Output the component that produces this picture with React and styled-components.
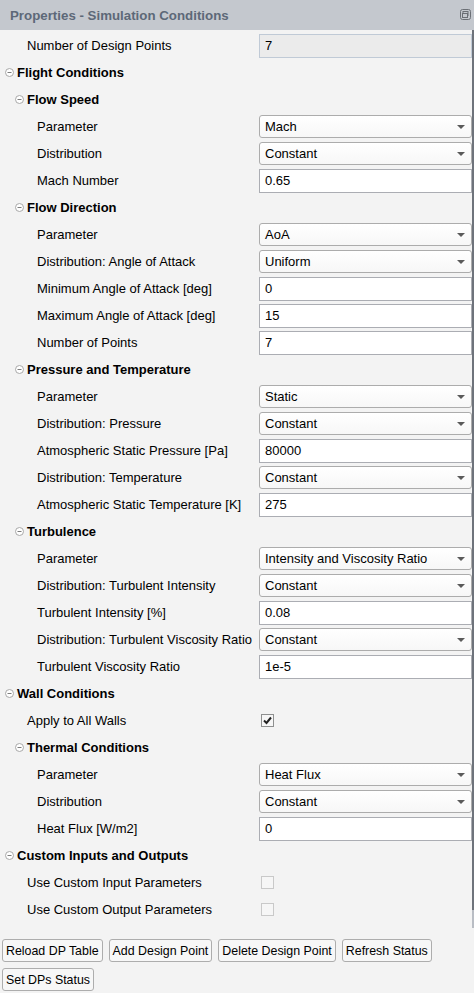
import React from 'react'
import styled, { createGlobalStyle } from 'styled-components'

const Global = createGlobalStyle`
  html, body {
    margin: 0;
    padding: 0;
    background: #f3f3f3;
  }
  body {
    font-family: "Liberation Sans", Arial, sans-serif;
    font-size: 13px;
    color: #000;
  }
`

const Panel = styled.div`
  width: 474px;
  height: 993px;
  display: flex;
  flex-direction: column;
  background: #f3f3f3;
  overflow: hidden;
`

const Header = styled.div`
  height: 30px;
  flex: none;
  display: flex;
  align-items: center;
  justify-content: space-between;
  padding: 0 3px 0 10px;
  background: #c4c8ce;
  color: #5d6878;
  font-weight: bold;
  font-size: 13.3px;
`

const FloatIcon = styled.svg`
  width: 11px;
  height: 11px;
  margin-top: -2px;
`

const Body = styled.div`
  display: flex;
  height: 898px;
  flex: none;
`

const Rows = styled.div`
  flex: 1;
  display: flex;
  flex-direction: column;
  padding-top: 2px;
`

const Scroll = styled.div`
  width: 2px;
  flex: none;
  display: flex;
  flex-direction: column;
  background: #b9bdc4;
`

const Thumb = styled.div`
  height: 880px;
  background: #6e737b;
`

const Row = styled.div`
  height: 27px;
  display: grid;
  grid-template-columns: 259px 213px;
  align-items: center;
`

const Label = styled.div`
  padding-left: ${p => p.indent}px;
  display: flex;
  align-items: center;
  white-space: nowrap;
  overflow: hidden;
  font-weight: ${p => (p.bold ? 'bold' : 'normal')};
  gap: 3px;
`

const Toggle = styled.svg`
  width: 9px;
  height: 9px;
  flex: none;
`

const Box = styled.div`
  height: 24px;
  box-sizing: border-box;
  display: flex;
  align-items: center;
  padding-left: 5px;
  background: ${p => (p.disabled ? '#ebebeb' : '#fff')};
  border: 1px solid ${p => (p.disabled ? '#c0cad6' : '#abadb3')};
`

const Select = styled.div`
  height: 23px;
  box-sizing: border-box;
  display: flex;
  align-items: center;
  justify-content: space-between;
  padding: 0 6px 0 5px;
  background: linear-gradient(#ffffff, #f7f7f7);
  border: 1px solid #acacac;
  border-radius: 3px;
`

const Caret = styled.span`
  width: 0;
  height: 0;
  border-left: 4px solid transparent;
  border-right: 4px solid transparent;
  border-top: 4px solid #5a5a5a;
`

const Check = styled.div`
  width: 13px;
  height: 13px;
  margin-left: 2px;
  box-sizing: border-box;
  border: 1px solid ${p => (p.checked ? '#8e8f8f' : '#c9c9c9')};
  background: #f6f6f6;
  display: flex;
  align-items: center;
  justify-content: center;
`

const Buttons = styled.div`
  display: flex;
  flex-wrap: wrap;
  gap: 6px 6px;
  padding: 11px 2px 0 2px;
`

const Button = styled.button`
  height: 23px;
  margin: 0;
  padding: 0 3px;
  font: inherit;
  font-size: 12.4px;
  color: #000;
  background: #f7f7f7;
  border: 1px solid #adadad;
  border-radius: 3px;
`

const Minus = () => (
  <Toggle viewBox="0 0 9 9">
    <circle cx="4.5" cy="4.5" r="4" fill="#fff" stroke="#a9a9a9" />
    <line x1="2.5" y1="4.5" x2="6.5" y2="4.5" stroke="#7c7c7c" />
  </Toggle>
)

const rows = [
  { label: 'Number of Design Points', indent: 27, box: '7', disabled: true },
  { cat: 'Flight Conditions', indent: 5 },
  { cat: 'Flow Speed', indent: 15 },
  { label: 'Parameter', indent: 37, select: 'Mach' },
  { label: 'Distribution', indent: 37, select: 'Constant' },
  { label: 'Mach Number', indent: 37, box: '0.65' },
  { cat: 'Flow Direction', indent: 15 },
  { label: 'Parameter', indent: 37, select: 'AoA' },
  { label: 'Distribution: Angle of Attack', indent: 37, select: 'Uniform' },
  { label: 'Minimum Angle of Attack [deg]', indent: 37, box: '0' },
  { label: 'Maximum Angle of Attack [deg]', indent: 37, box: '15' },
  { label: 'Number of Points', indent: 37, box: '7' },
  { cat: 'Pressure and Temperature', indent: 15 },
  { label: 'Parameter', indent: 37, select: 'Static' },
  { label: 'Distribution: Pressure', indent: 37, select: 'Constant' },
  { label: 'Atmospheric Static Pressure [Pa]', indent: 37, box: '80000' },
  { label: 'Distribution: Temperature', indent: 37, select: 'Constant' },
  { label: 'Atmospheric Static Temperature [K]', indent: 37, box: '275' },
  { cat: 'Turbulence', indent: 15 },
  { label: 'Parameter', indent: 37, select: 'Intensity and Viscosity Ratio' },
  { label: 'Distribution: Turbulent Intensity', indent: 37, select: 'Constant' },
  { label: 'Turbulent Intensity [%]', indent: 37, box: '0.08' },
  { label: 'Distribution: Turbulent Viscosity Ratio', indent: 37, select: 'Constant' },
  { label: 'Turbulent Viscosity Ratio', indent: 37, box: '1e-5' },
  { cat: 'Wall Conditions', indent: 5 },
  { label: 'Apply to All Walls', indent: 27, check: true },
  { cat: 'Thermal Conditions', indent: 15 },
  { label: 'Parameter', indent: 37, select: 'Heat Flux' },
  { label: 'Distribution', indent: 37, select: 'Constant' },
  { label: 'Heat Flux [W/m2]', indent: 37, box: '0' },
  { cat: 'Custom Inputs and Outputs', indent: 5 },
  { label: 'Use Custom Input Parameters', indent: 27, check: false },
  { label: 'Use Custom Output Parameters', indent: 27, check: false },
]

const Value = ({ r }) => {
  if (r.select) return <Select>{r.select}<Caret /></Select>
  if (r.box !== undefined) return <Box disabled={r.disabled}>{r.box}</Box>
  if (r.check !== undefined)
    return (
      <Check checked={r.check}>
        {r.check && (
          <svg width="11" height="11" viewBox="0 0 11 11">
            <path d="M2 5.5 L4.5 8 L9 2.5" fill="none" stroke="#222" strokeWidth="2" />
          </svg>
        )}
      </Check>
    )
  return null
}

export default function App() {
  return (
    <Panel>
      <Global />
      <Header>
        <span>Properties - Simulation Conditions</span>
        <FloatIcon viewBox="0 0 11 11">
          <rect x="0.5" y="0.5" width="10" height="10" rx="2" fill="none" stroke="#6b6f75" />
          <rect x="3" y="2.5" width="5" height="4" fill="none" stroke="#6b6f75" />
          <rect x="2.5" y="4.5" width="5" height="4" fill="#c4c8ce" stroke="#6b6f75" />
        </FloatIcon>
      </Header>
      <Body>
        <Rows>
          {rows.map((r, i) => (
            <Row key={i}>
              {r.cat ? (
                <Label indent={r.indent} bold>
                  <Minus />
                  {r.cat}
                </Label>
              ) : (
                <Label indent={r.indent}>{r.label}</Label>
              )}
              <Value r={r} />
            </Row>
          ))}
        </Rows>
        <Scroll>
          <Thumb />
        </Scroll>
      </Body>
      <Buttons>
        <Button>Reload DP Table</Button>
        <Button>Add Design Point</Button>
        <Button>Delete Design Point</Button>
        <Button>Refresh Status</Button>
        <Button>Set DPs Status</Button>
      </Buttons>
    </Panel>
  )
}
